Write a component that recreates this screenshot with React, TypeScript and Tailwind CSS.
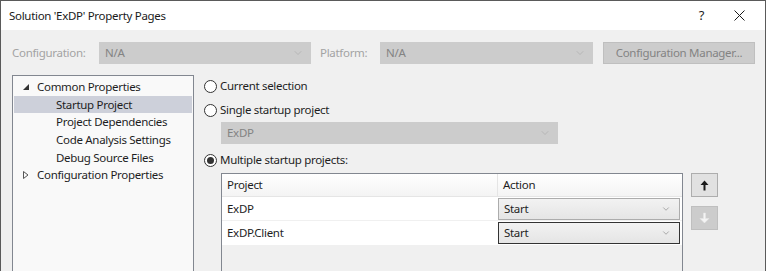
import { ChevronDown } from 'lucide-react';

const font = { fontFamily: '"Noto Sans", "Open Sans", sans-serif', letterSpacing: '-0.3px' };

function Combo({ text, className }: { text: string; className: string }) {
  return (
    <div className={`flex items-center justify-between bg-[#cccccc] border border-[#cccccc] pl-[5px] pr-[6px] text-[#838383] ${className}`}>
      <span>{text}</span>
      <ChevronDown size={12} strokeWidth={1} className="text-[#a0a0a0]" />
    </div>
  );
}

function Radio({ checked, label }: { checked?: boolean; label: string }) {
  return (
    <div className="flex items-center gap-[3px] h-[18px]">
      <span className="w-[13px] h-[13px] rounded-full border border-[#333333] bg-white flex items-center justify-center">
        {checked && <span className="w-[7px] h-[7px] rounded-full bg-[#333333]" />}
      </span>
      <span className="text-[#1e1e1e]">{label}</span>
    </div>
  );
}

function ActionCell({ focused }: { focused?: boolean }) {
  return (
    <div
      className={`flex items-center justify-between h-[22px] pl-[5px] pr-[8px] bg-gradient-to-b from-[#f2f2f2] to-[#e5e5e5] ${
        focused ? 'border-[1.5px] border-[#333333]' : 'border border-[#acacac]'
      }`}
    >
      <span>Start</span>
      <ChevronDown size={10} strokeWidth={1.5} className="text-[#808080]" />
    </div>
  );
}

export default function App() {
  const tree = [
    { label: 'Common Properties', level: 0, icon: 'open' },
    { label: 'Startup Project', level: 1, selected: true },
    { label: 'Project Dependencies', level: 1 },
    { label: 'Code Analysis Settings', level: 1 },
    { label: 'Debug Source Files', level: 1 },
    { label: 'Configuration Properties', level: 0, icon: 'closed' },
  ];

  return (
    <div className="w-[768px] h-[271px] overflow-hidden bg-white text-[11.5px] text-[#1e1e1e]" style={font}>
      <div className="w-[766px] h-[271px] border-l border-t border-r border-[#5a5a5a] bg-[#f0f0f0] flex flex-col">
        {/* Title bar */}
        <div className="h-[29px] bg-white flex items-center pl-[8px] pr-[16px] shrink-0">
          <span className="text-[#1a1a1a]">Solution 'ExDP' Property Pages</span>
          <span className="ml-auto mr-[30px] text-[13px]">?</span>
          <svg width="11" height="11" viewBox="0 0 11 11" className="mr-[4px]">
            <path d="M0.5 0.5 L10.5 10.5 M10.5 0.5 L0.5 10.5" stroke="#1a1a1a" strokeWidth="1" />
          </svg>
        </div>

        {/* Configuration row */}
        <div className="flex items-center mt-[12px] pl-[11px] h-[22px] text-[#a3a3a3]">
          <span className="w-[87px]">Configuration:</span>
          <Combo text="N/A" className="w-[212px] h-[22px]" />
          <span className="ml-[9px] w-[60px]">Platform:</span>
          <Combo text="N/A" className="w-[213px] h-[22px]" />
          <div className="ml-[10px] w-[152px] h-[22px] bg-[#cccccc] border border-[#bfbfbf] flex items-center justify-center text-[#838383]">
            Configuration Manager...
          </div>
        </div>

        {/* Main area */}
        <div className="flex flex-1 mt-[11px] pl-[11px]">
          {/* Tree */}
          <div className="w-[182px] border border-[#828790] border-b-0 bg-[#f9f9f9] pt-[2px] px-[1px]">
            {tree.map((item) => (
              <div
                key={item.label}
                className={`h-[17.6px] flex items-center ${item.selected ? 'bg-[#cdd0da]' : ''}`}
                style={{ paddingLeft: item.level === 0 ? 9 : 42 }}
              >
                {item.icon === 'open' && (
                  <svg width="6" height="6" viewBox="0 0 6 6" className="mr-[8px]">
                    <path d="M6 0 L6 6 L0 6 Z" fill="#333333" />
                  </svg>
                )}
                {item.icon === 'closed' && (
                  <svg width="6" height="8" viewBox="0 0 6 8" className="mr-[8px]">
                    <path d="M0.5 0.5 L5 4 L0.5 7.5 Z" fill="none" stroke="#555555" strokeWidth="1" />
                  </svg>
                )}
                <span>{item.label}</span>
              </div>
            ))}
          </div>

          {/* Right panel */}
          <div className="flex-1 pl-[10px] pt-[2px]">
            <Radio label="Current selection" />
            <div className="mt-[6px]">
              <Radio label="Single startup project" />
            </div>
            <div className="ml-[17px] mt-[3px]">
              <Combo text="ExDP" className="w-[337px] h-[22px]" />
            </div>
            <div className="mt-[7px]">
              <Radio checked label="Multiple startup projects:" />
            </div>

            <div className="flex mt-[4px]">
              {/* Grid */}
              <div className="ml-[17px] w-[462px] h-[100px] border border-[#828790] border-b-0 bg-[#f0f0f0]">
                <div className="flex h-[23px] bg-gradient-to-b from-white to-[#f4f4f4] border-b border-[#e5e5e5]">
                  <div className="w-[276px] pl-[5px] flex items-center border-r border-[#e5e5e5]">Project</div>
                  <div className="flex-1 pl-[5px] flex items-center">Action</div>
                </div>
                <div className="flex h-[24px] bg-white border-b border-[#f0f0f0]">
                  <div className="w-[276px] pl-[5px] flex items-center">ExDP</div>
                  <div className="flex-1 pt-[1px] pr-[2px]">
                    <ActionCell />
                  </div>
                </div>
                <div className="flex h-[24px] bg-white">
                  <div className="w-[276px] pl-[5px] flex items-center">ExDP.Client</div>
                  <div className="flex-1 pt-[1px] pr-[2px]">
                    <ActionCell focused />
                  </div>
                </div>
              </div>

              {/* Up / Down */}
              <div className="ml-[8px] flex flex-col gap-[9px]">
                <div className="w-[27px] h-[24px] bg-[#e1e1e1] border border-[#adadad] flex items-center justify-center">
                  <svg width="9" height="11" viewBox="0 0 9 11">
                    <path d="M4.5 0.5 L8.5 5 L5.5 5 L5.5 10.5 L3.5 10.5 L3.5 5 L0.5 5 Z" fill="#1a1a1a" />
                  </svg>
                </div>
                <div className="w-[27px] h-[24px] bg-[#cccccc] border border-[#bfbfbf] flex items-center justify-center">
                  <svg width="11" height="12" viewBox="0 0 11 12">
                    <path d="M5.5 11 L1 6.5 L4.5 6.5 L4.5 1 L6.5 1 L6.5 6.5 L10 6.5 Z" fill="#f4f4f4" stroke="#e6e6e6" strokeWidth="0.5" />
                  </svg>
                </div>
              </div>
            </div>
          </div>
        </div>
      </div>
    </div>
  );
}
